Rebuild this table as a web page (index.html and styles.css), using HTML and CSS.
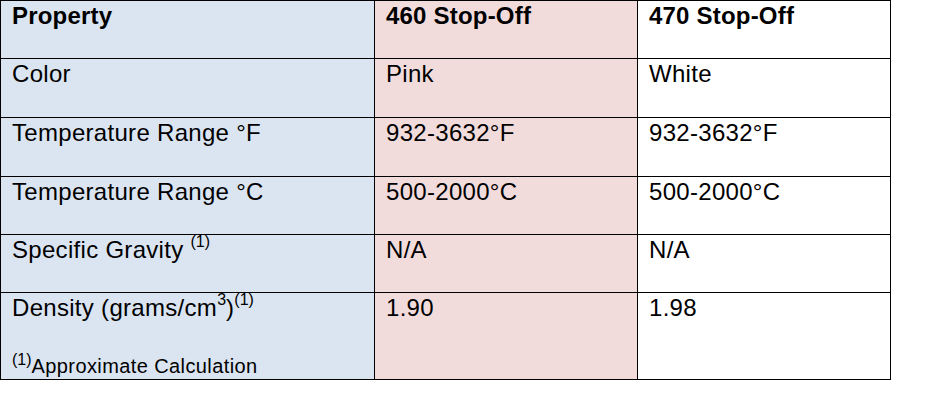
FILE: index.html
```html
<!DOCTYPE html>
<html lang="en">
<head>
<meta charset="utf-8">
<title>Stop-Off Properties</title>
<link rel="stylesheet" href="styles.css">
</head>
<body>
<table class="props">
  <colgroup>
    <col class="c-prop">
    <col class="c-460">
    <col class="c-470">
  </colgroup>
  <tr class="r-std">
    <th class="prop">Property</th>
    <th class="pink">460 Stop-Off</th>
    <th class="white">470 Stop-Off</th>
  </tr>
  <tr class="r-tall">
    <td class="prop">Color</td>
    <td class="pink">Pink</td>
    <td class="white">White</td>
  </tr>
  <tr class="r-tall">
    <td class="prop">Temperature Range °F</td>
    <td class="pink">932-3632°F</td>
    <td class="white">932-3632°F</td>
  </tr>
  <tr class="r-std">
    <td class="prop">Temperature Range °C</td>
    <td class="pink">500-2000°C</td>
    <td class="white">500-2000°C</td>
  </tr>
  <tr class="r-std">
    <td class="prop">Specific Gravity <sup class="sup">(1)</sup></td>
    <td class="pink">N/A</td>
    <td class="white">N/A</td>
  </tr>
  <tr class="r-last">
    <td class="prop">
      <div>Density (grams/cm<sup class="sup">3</sup>)<sup class="sup">(1)</sup></div>
      <div class="note"><sup class="sup">(1)</sup>Approximate Calculation</div>
    </td>
    <td class="pink">1.90</td>
    <td class="white">1.98</td>
  </tr>
</table>
</body>
</html>
```

FILE: styles.css
```css
html, body {
  margin: 0;
  padding: 0;
  background: #ffffff;
}

body {
  font-family: "Liberation Sans", Arial, sans-serif;
  color: #000000;
}

.props {
  border-collapse: collapse;
  table-layout: fixed;
  width: 891px;
  font-size: 24px;
  letter-spacing: 0.3px;
}

.c-prop { width: 374px; }
.c-460 { width: 263px; }
.c-470 { width: 253px; }

.props th,
.props td {
  border: 1px solid #000000;
  padding: 1px 10px 0 11px;
  vertical-align: top;
  text-align: left;
  line-height: 27px;
}

.props th {
  font-weight: bold;
  letter-spacing: 0.2px;
}

.r-std { height: 58px; }
.r-tall { height: 59px; }
.r-last { height: 87px; }

.prop { background: #dbe5f1; }
.pink { background: #f2dcdb; }
.white { background: #ffffff; }

.sup {
  font-size: 16px;
  line-height: 0;
  vertical-align: 11px;
  letter-spacing: 0;
}

.note {
  margin-top: 34px;
  font-size: 20px;
  line-height: 23px;
  letter-spacing: 0.4px;
}

.note .sup {
  font-size: 16px;
  vertical-align: 8px;
  letter-spacing: 0;
}
```
